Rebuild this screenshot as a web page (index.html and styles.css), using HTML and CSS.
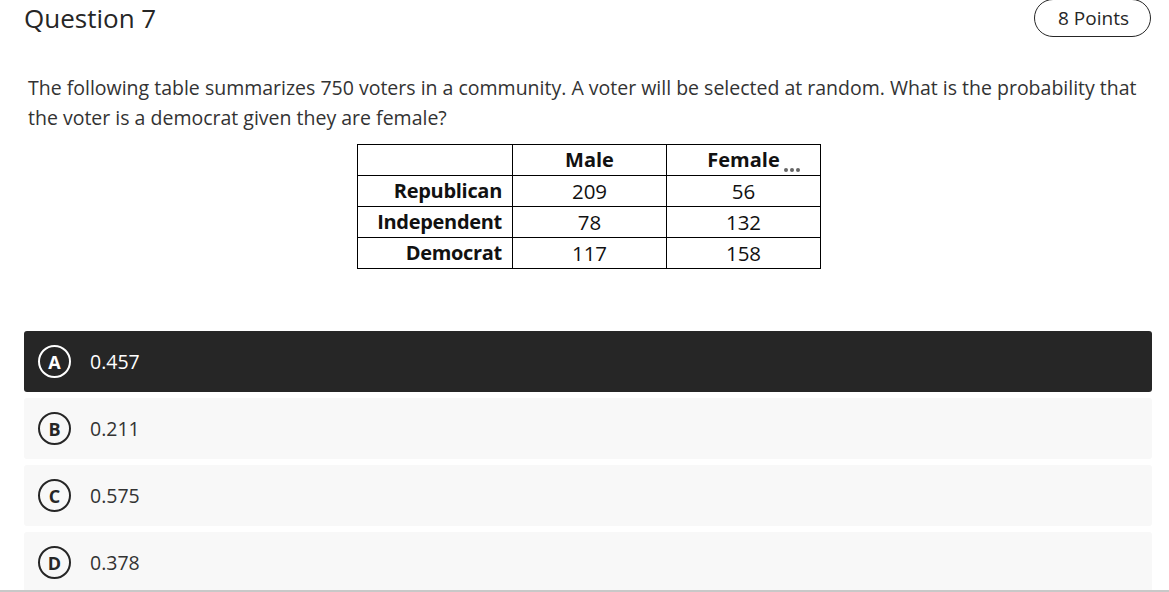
FILE: index.html
```html
<!DOCTYPE html>
<html>
<head>
<meta charset="utf-8">
<link rel="stylesheet" href="styles.css">
</head>
<body>
<div class="page">
  <header class="head">
    <h1 class="title">Question 7</h1>
    <div class="points">8 Points</div>
  </header>
  <p class="prompt">The following table summarizes 750 voters in a community. A voter will be selected at random. What is the probability that the voter is a democrat given they are female?</p>
  <div class="table-wrap">
    <table class="data">
      <tr><th class="rl"></th><th>Male</th><th class="fem">Female<span class="dots"><i></i><i></i><i></i></span></th></tr>
      <tr><th class="rl">Republican</th><td>209</td><td>56</td></tr>
      <tr><th class="rl">Independent</th><td>78</td><td>132</td></tr>
      <tr><th class="rl">Democrat</th><td>117</td><td>158</td></tr>
    </table>
  </div>
  <div class="options">
    <div class="opt selected"><span class="letter">A</span><span class="val">0.457</span></div>
    <div class="opt"><span class="letter">B</span><span class="val">0.211</span></div>
    <div class="opt"><span class="letter">C</span><span class="val">0.575</span></div>
    <div class="opt"><span class="letter">D</span><span class="val">0.378</span></div>
  </div>
</div>
<div class="bottom-line"></div>
</body>
</html>
```
FILE: styles.css
```css
html, body { margin: 0; padding: 0; background: #fff; }
body { font-family: "Open Sans", "Noto Sans", sans-serif; color: #333; overflow: hidden; height: 592px; position: relative; }
.page { padding: 0 17px 0 24px; }
.head { display: flex; justify-content: space-between; align-items: flex-start; height: 37px; }
.title { margin: 0; font-size: 26px; font-weight: 400; line-height: 34px; color: #262626; padding-top: 1px; }
.points { margin-top: -1px; height: 38px; box-sizing: border-box; border: 1px solid #262626; border-radius: 19px; padding: 0 21px 0 23px; font-size: 19px; line-height: 36px; color: #262626; margin-right: 1px; }
.prompt { margin: 36px 0 0 4px; font-size: 19.5px; line-height: 30px; color: #333; }
.table-wrap { display: flex; padding-left: 333px; margin-top: 11px; }
.data { border-collapse: collapse; font-family: "Open Sans", "Liberation Sans", sans-serif; font-size: 20.5px; color: #111; }
.data th, .data td { border: 1px solid #000; height: 30px; padding: 0; text-align: center; font-weight: 400; line-height: 24px; }
.data tr:first-child th { font-weight: 700; font-size: 20px; }
.data .rl { width: 155px; text-align: right; padding-right: 10px; font-weight: 700; font-size: 20px; letter-spacing: -0.3px; box-sizing: border-box; }
.data td, .data th:not(.rl) { width: 153px; }
.fem { position: relative; }
.dots { position: absolute; left: 117px; top: 23px; display: flex; gap: 2px; }
.dots i { width: 4px; height: 4px; border-radius: 50%; background: #666; display: block; }
.options { margin-top: 62px; display: flex; flex-direction: column; gap: 6px; }
.opt { height: 61px; background: #f8f8f8; border-radius: 3px; display: flex; align-items: center; padding-left: 14px; color: #333; }
.opt.selected { background: #262626; color: #fff; }
.letter { flex: none; box-sizing: border-box; width: 33px; height: 33px; border: 2px solid #262626; border-radius: 50%; display: flex; align-items: center; justify-content: center; font-weight: 700; font-size: 18px; color: #262626; }
.selected .letter { border-color: #fff; color: #fff; }
.val { margin-left: 19px; font-size: 19.5px; }
.bottom-line { position: absolute; left: 0; right: 0; top: 590px; height: 2px; background: #c8c8c8; }
```
